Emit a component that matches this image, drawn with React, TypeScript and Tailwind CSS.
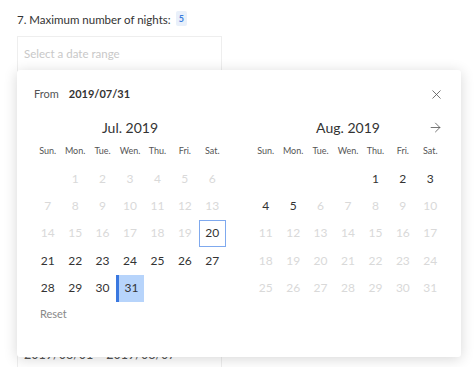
import { X, ArrowRight } from 'lucide-react';

const weekdays = ['Sun.', 'Mon.', 'Tue.', 'Wen.', 'Thu.', 'Fri.', 'Sat.'];

type Day = { n: number; state: 'off' | 'on' | 'start' | 'end' } | null;

function buildMonth(offset: number, total: number, stateOf: (n: number) => 'off' | 'on' | 'start' | 'end'): Day[] {
  const cells: Day[] = [];
  for (let i = 0; i < offset; i++) cells.push(null);
  for (let n = 1; n <= total; n++) cells.push({ n, state: stateOf(n) });
  return cells;
}

const july = buildMonth(1, 31, (n) => (n < 20 ? 'off' : n === 20 ? 'start' : n === 31 ? 'end' : 'on'));
const august = buildMonth(4, 31, (n) => (n <= 5 ? 'on' : 'off'));

function MonthGrid({ title, days, arrow }: { title: string; days: Day[]; arrow?: boolean }) {
  return (
    <div className="w-[192px]">
      <div className="relative h-[20px] flex items-center justify-center text-[14px] text-[#333] mb-[4px]">
        {title}
        {arrow && <ArrowRight className="absolute right-[1px] top-[3px] w-[15px] h-[15px] text-[#555]" strokeWidth={1.3} />}
      </div>
      <div className="grid grid-cols-7 h-[20px] items-center text-[9px] text-[#555] mb-[4px]">
        {weekdays.map((w) => (
          <div key={w} className="text-center">{w}</div>
        ))}
      </div>
      <div className="grid grid-cols-7">
        {days.map((d, i) =>
          d === null ? (
            <div key={i} className="h-[27.4px]" />
          ) : (
            <div
              key={i}
              className={`h-[27.4px] flex items-center justify-center text-[12px] ${
                d.state === 'off'
                  ? 'text-[#d9d9d9]'
                  : d.state === 'start'
                  ? 'text-[#333] border border-[#7fa9ee]'
                  : d.state === 'end'
                  ? 'text-[#333] bg-[#b7d4fb] border-l-[3px] border-[#3a78e0]'
                  : 'text-[#333]'
              }`}
            >
              {d.n}
            </div>
          )
        )}
      </div>
    </div>
  );
}

export default function App() {
  return (
    <div className="relative w-[474px] h-[367px] overflow-hidden bg-white font-['Lato',sans-serif]">
      <div className="pl-[17px] pt-[10px] h-[36px] flex items-start text-[11.5px] text-[#333]">
        <span className="mt-[1px]">7. Maximum number of nights:</span>
        <span className="ml-[5px] mt-[1px] px-[3px] h-[15px] flex items-center bg-[#e9f0fa] text-[#3b7ddd] text-[9px] font-bold rounded-[2px]">5</span>
      </div>

      {/* Input */}
      <div className="ml-[17px] w-[205px] h-[340px] border border-[#eeeeee]">
        <div className="h-[33px] flex items-center px-[6px] text-[11.5px] text-[#c8c8c8]">Select a date range</div>
        <div className="mt-[276px] flex gap-[13px] px-[6px] text-[12.5px] text-[#555]">
          <span>2019/08/01</span>
          <span>2019/08/07</span>
        </div>
      </div>

      {/* Popup */}
      <div className="absolute left-[17px] top-[70px] w-[444px] h-[287px] bg-white rounded-[3px] shadow-[0_2px_14px_rgba(0,0,0,0.16)] px-[17px] pt-[14px]">
        <div className="relative h-[20px] flex items-center text-[11px]">
          <span className="text-[#555]">From</span>
          <span className="ml-[10px] text-[#333] font-bold">2019/07/31</span>
          <X className="absolute right-[0px] top-[3px] w-[15px] h-[15px] text-[#555]" strokeWidth={1.3} />
        </div>
        <div className="mt-[13px] flex justify-between">
          <MonthGrid title="Jul. 2019" days={july} />
          <MonthGrid title="Aug. 2019" days={august} arrow />
        </div>
        <div className="mt-[4px] h-[16px] flex items-center pl-[6px] text-[11px] text-[#888]">Reset</div>
      </div>
    </div>
  );
}
